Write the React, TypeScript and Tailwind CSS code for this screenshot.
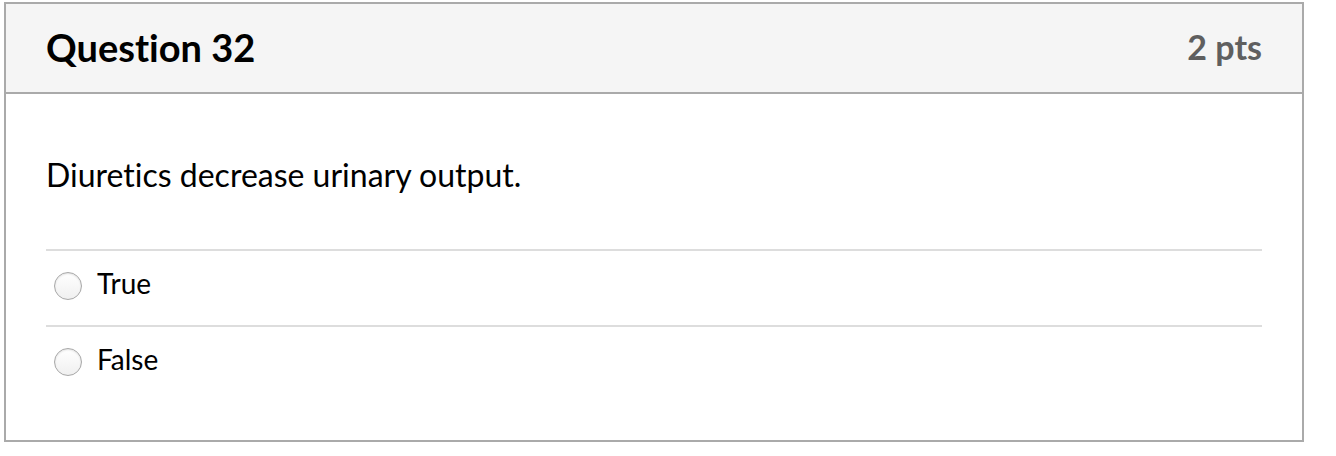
export default function App() {
  const answers = ['True', 'False'];

  return (
    <div
      className="min-h-screen bg-white pl-[4px] pt-[2px] [font-variant-ligatures:none]"
      style={{ fontFamily: 'Lato, "Noto Sans", sans-serif' }}
    >
      <div className="w-[1300px] border-2 border-[#aaaaaa] bg-white">
        {/* Header */}
        <div className="flex h-[90px] items-center justify-between border-b-2 border-[#aaaaaa] bg-[#f5f5f5] px-10 pb-[2px]">
          <h2 className="text-[38px] font-bold leading-none text-black">Question 32</h2>
          <span className="text-[34px] font-bold leading-none text-[#5f5f5f]">2 pts</span>
        </div>

        {/* Body */}
        <div className="px-10 pt-[58px] pb-[39px]">
          <p className="text-[32px] leading-[45px] text-black">Diuretics decrease urinary output.</p>

          <div className="mt-[52px]">
            {answers.map((a) => (
              <label key={a} className="flex h-[76px] items-center border-t-2 border-[#dddddd] pb-[4px]">
                <span className="ml-2 h-[28px] w-[28px] rounded-full border border-[#a8a8a8] bg-gradient-to-b from-white to-[#f0f0f0] shadow-[inset_0_1px_2px_rgba(0,0,0,0.12)]" />
                <span className="mb-[6px] ml-[15px] text-[28px] leading-none text-black">{a}</span>
              </label>
            ))}
          </div>
        </div>
      </div>
    </div>
  );
}
